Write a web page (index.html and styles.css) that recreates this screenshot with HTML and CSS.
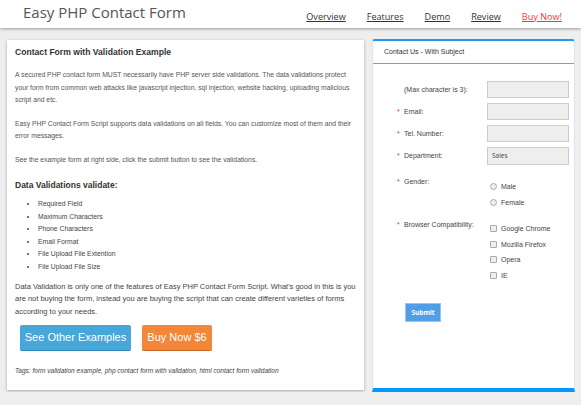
FILE: index.html
```html
<!DOCTYPE html>
<html lang="en">
<head>
    <meta charset="UTF-8">
    <title>Easy PHP Contact Form - Validation Example</title>
    <link rel="stylesheet" href="styles.css">
</head>
<body>
    <div class="topbar">
        <div class="brand">Easy PHP Contact Form</div>
        <ul class="nav">
            <li><a href="#">Overview</a></li>
            <li><a href="#">Features</a></li>
            <li><a href="#">Demo</a></li>
            <li><a href="#">Review</a></li>
            <li><a href="#" class="buy">Buy Now!</a></li>
        </ul>
    </div>

    <div class="main">
        <div class="content">
            <h2>Contact Form with Validation Example</h2>
            <p>A secured PHP contact form MUST necessarily have PHP server side validations. The data validations protect your form from common web attacks like javascript injection, sql injection, website hacking, uploading malicious script and etc.</p>
            <p>Easy PHP Contact Form Script supports data validations on all fields. You can customize most of them and their error messages.</p>
            <p>See the example form at right side, click the submit button to see the validations.</p>
            <h3>Data Validations validate:</h3>
            <ul class="checks">
                <li>Required Field</li>
                <li>Maximum Characters</li>
                <li>Phone Characters</li>
                <li>Email Format</li>
                <li>File Upload File Extention</li>
                <li>File Upload File Size</li>
            </ul>
            <p class="note">Data Validation is only one of the features of Easy PHP Contact Form Script. What's good in this is you are not buying the form, instead you are buying the script that can create different varieties of forms according to your needs.</p>
            <div class="actions">
                <a href="#" class="btn blue">See Other Examples</a>
                <a href="#" class="btn orange">Buy Now $6</a>
            </div>
            <p class="tags">Tags: form validation example, php contact form with validation, html contact form validation</p>
        </div>

        <div class="formbox">
            <div class="formhead">Contact Us - With Subject</div>
            <div class="form">
                <div class="row">
                    <label><span class="req"></span>(Max character is 3):</label>
                    <div class="field"><div class="input"></div></div>
                </div>
                <div class="row">
                    <label><span class="req">*</span>Email:</label>
                    <div class="field"><div class="input"></div></div>
                </div>
                <div class="row">
                    <label><span class="req">*</span>Tel. Number:</label>
                    <div class="field"><div class="input"></div></div>
                </div>
                <div class="row">
                    <label><span class="req">*</span>Department:</label>
                    <div class="field"><div class="input select">Sales</div></div>
                </div>
                <div class="row top gender">
                    <label><span class="req">*</span>Gender:</label>
                    <div class="field">
                        <div class="opt"><span class="radio"></span>Male</div>
                        <div class="opt"><span class="radio"></span>Female</div>
                    </div>
                </div>
                <div class="row top">
                    <label><span class="req">*</span>Browser Compatibility:</label>
                    <div class="field">
                        <div class="opt chk"><span class="box"></span>Google Chrome</div>
                        <div class="opt chk"><span class="box"></span>Mozilla Firefox</div>
                        <div class="opt chk"><span class="box"></span>Opera</div>
                        <div class="opt chk"><span class="box"></span>IE</div>
                    </div>
                </div>
                <button class="submit">Submit</button>
            </div>
        </div>
    </div>
</body>
</html>
```

FILE: styles.css
```css
* {
    margin: 0px;
    padding: 0px;
    box-sizing: border-box;
}

body {
    background-color: #eeeeee;
    font-family: "Liberation Sans", Arial, sans-serif;
    color: #444;
}

/* ---------- top bar ---------- */
.topbar {
    height: 28px;
    background-color: white;
    box-shadow: 0 1px 3px rgba(0, 0, 0, 0.35);
    display: flex;
    align-items: center;
    justify-content: space-between;
    padding: 0 19px 0 23px;
}

.brand {
    font-family: "Open Sans", sans-serif;
    font-size: 15px;
    color: #555;
    margin-top: -5px;
}

.nav {
    display: flex;
    gap: 21px;
    list-style-type: none;
    margin-top: 1px;
}

.nav a {
    font-family: "Open Sans", sans-serif;
    font-size: 9.1px;
    color: #333;
}

.nav a.buy {
    color: #f33;
}

/* ---------- page ---------- */
.main {
    display: flex;
    gap: 8px;
    padding: 12px 0 0 7px;
}

.content {
    width: 357px;
    height: 350px;
    background-color: white;
    box-shadow: 0 1px 3px rgba(0, 0, 0, 0.3);
    padding: 7px 8px;
}

.content h2 {
    font-size: 8.6px;
    color: #333;
    line-height: 11px;
    margin-bottom: 11px;
}

.content p {
    font-size: 6.8px;
    line-height: 12.5px;
    color: #555;
    margin-bottom: 11px;
}

.content h3 {
    font-size: 8.5px;
    color: #333;
    line-height: 12px;
    margin: 13px 0 7px;
}

.checks {
    padding-left: 23px;
    margin-bottom: 7px;
}

.checks li {
    font-size: 6.8px;
    line-height: 12.6px;
    color: #444;
}

.content p.note {
    font-size: 7.5px;
    color: #444;
    margin-bottom: 7px;
}

.actions {
    display: flex;
    gap: 11px;
    padding-left: 5px;
    margin-bottom: 14px;
}

.btn {
    display: block;
    height: 26px;
    line-height: 25px;
    font-size: 11px;
    text-align: center;
    white-space: nowrap;
    color: white;
    text-decoration: none;
    border-radius: 2px;
}

.blue {
    width: 111px;
    background-color: #47a7d8;
    border-bottom: 1px solid #2f86b5;
}

.orange {
    width: 70px;
    background-color: #f2873a;
    border-bottom: 1px solid #c9661f;
}

.content p.tags {
    font-size: 6.5px;
    font-style: italic;
    color: #444;
}

/* ---------- contact form ---------- */
.formbox {
    width: 203px;
    height: 353px;
    margin-top: -1px;
    background-color: white;
    border-top: 2px solid #2196f3;
    border-left: 1px solid #d6e6f5;
    border-right: 1px solid #d6e6f5;
    border-bottom: 4px solid #0099ff;
    border-radius: 3px 3px 0 0;
}

.formhead {
    height: 23px;
    line-height: 22px;
    font-size: 7px;
    color: #333;
    padding-left: 11px;
    border-bottom: 1px solid #5aaaea;
}

.form {
    padding: 17px 0 0 24px;
}

.row {
    display: flex;
    align-items: center;
    margin-bottom: 5px;
}

.row.top {
    align-items: flex-start;
    margin-top: 11px;
}

.row.gender {
    margin-top: 13px;
}

.row label {
    width: 90px;
    font-size: 7px;
    color: #444;
    line-height: 8px;
}

.req {
    display: inline-block;
    width: 7px;
    color: #e53935;
}

.field {
    width: 82px;
}

.input {
    height: 17px;
    background-color: #eeeeee;
    border: 1px solid #cccccc;
}

.input.select {
    height: 18px;
    font-family: "Open Sans", sans-serif;
    font-size: 6.5px;
    line-height: 16px;
    padding-left: 4px;
    color: #444;
}

.opt {
    display: flex;
    align-items: center;
    height: 16px;
    font-size: 7px;
    color: #444;
    padding-left: 3px;
}

.opt.chk {
    height: 15.6px;
}

.radio, .box {
    width: 7px;
    height: 7px;
    margin-right: 4px;
    border: 1px solid #aaa;
    background-color: #eee;
}

.radio {
    border-radius: 50%;
}

.box {
    border-radius: 1px;
}

.submit {
    display: block;
    margin: 20px 0 0 8px;
    width: 36px;
    height: 19px;
    background-color: #519ee8;
    border: 1px solid #9cc3ea;
    color: white;
    font-family: "Open Sans", sans-serif;
    font-weight: bold;
    font-size: 6.5px;
}
```
